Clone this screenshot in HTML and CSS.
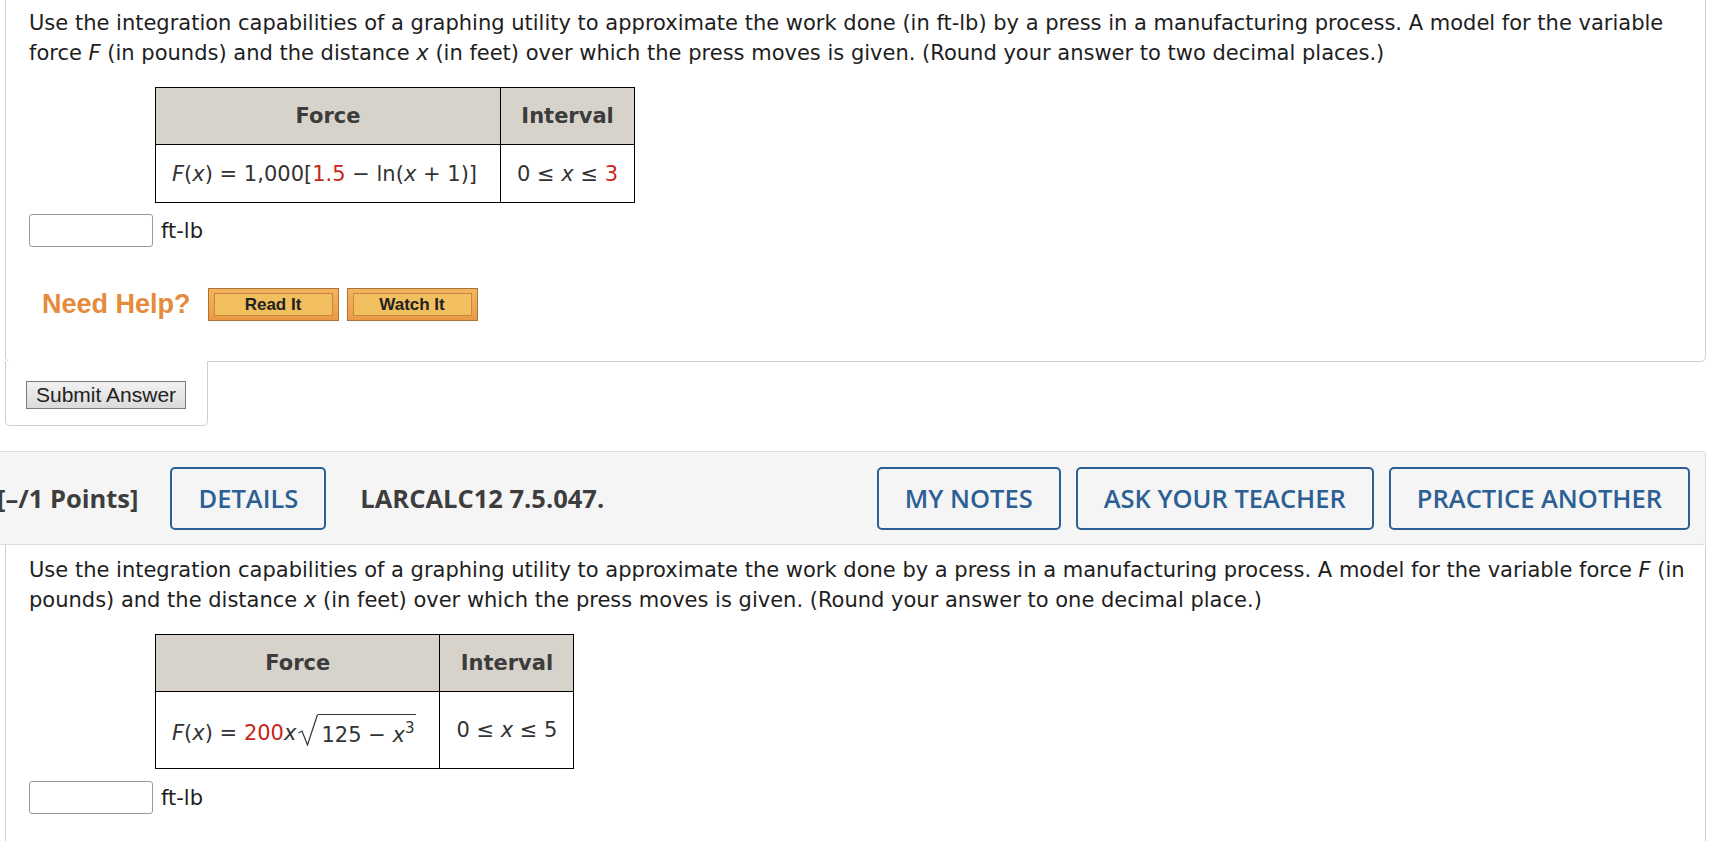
FILE: index.html
```html
<!DOCTYPE html>
<html lang="en">
<head>
<meta charset="utf-8">
<title>Question</title>
<link rel="stylesheet" href="styles.css">
</head>
<body>
<div class="question q1">
  <p class="prompt">Use the integration capabilities of a graphing utility to approximate the work done (in ft-lb) by a press in a manufacturing process. A model for the variable force <i>F</i> (in pounds) and the distance <i>x</i> (in feet) over which the press moves is given. (Round your answer to two decimal places.)</p>
  <table class="data">
    <tr><th>Force</th><th>Interval</th></tr>
    <tr>
      <td><i>F</i>(<i>x</i>) = 1,000[<span class="red">1.5</span> &minus; ln(<i>x</i> + 1)]</td>
      <td>0 &le; <i>x</i> &le; <span class="red">3</span></td>
    </tr>
  </table>
  <div class="answer"><span class="ansbox"></span><span class="unit">ft-lb</span></div>
  <div class="help">
    <span class="need">Need Help?</span>
    <span class="hbtn"><span class="hin">Read It</span></span>
    <span class="hbtn"><span class="hin">Watch It</span></span>
  </div>
</div>
<div class="submit-tab"><span class="submit">Submit Answer</span></div>

<div class="qhead">
  <span class="points">[&ndash;/1 Points]</span>
  <span class="obtn details">DETAILS</span>
  <span class="qid">LARCALC12 7.5.047.</span>
  <div class="actions">
    <span class="obtn">MY NOTES</span>
    <span class="obtn">ASK YOUR TEACHER</span>
    <span class="obtn">PRACTICE ANOTHER</span>
  </div>
</div>
<div class="question q2">
  <p class="prompt">Use the integration capabilities of a graphing utility to approximate the work done by a press in a manufacturing process. A model for the variable force <i>F</i> (in pounds) and the distance <i>x</i> (in feet) over which the press moves is given. (Round your answer to one decimal place.)</p>
  <table class="data">
    <tr><th>Force</th><th>Interval</th></tr>
    <tr class="tall">
      <td><i>F</i>(<i>x</i>) = <span class="red">200</span><i>x</i><span class="sqrt"><svg class="rad" width="20" height="32" viewBox="0 0 20 32"><path d="M0.5 19 L4 17 L9.5 31 L19.5 0.5" fill="none" stroke="#333" stroke-width="1.2"/></svg><span class="radicand">125 &minus; <i>x</i><sup>3</sup></span></span></td>
      <td>0 &le; <i>x</i> &le; 5</td>
    </tr>
  </table>
  <div class="answer"><span class="ansbox"></span><span class="unit">ft-lb</span></div>
</div>
</body>
</html>
```

FILE: styles.css
```css
html, body {
  margin: 0;
  padding: 0;
  background: #fff;
}
body {
  font-family: "DejaVu Sans", Verdana, sans-serif;
  font-size: 21px;
  color: #1e1e1e;
  overflow: hidden;
}
.question {
  margin: 0 26px 0 5px;
  border: 1px solid #cfcfcf;
  background: #fff;
  padding: 10px 20px 0 23px;
}
.q1 {
  margin-top: -3px;
  border-radius: 0 0 5px 5px;
  padding-bottom: 40px;
}
.q2 {
  border-top: none;
  padding-top: 10px;
  padding-bottom: 40px;
}
.prompt {
  margin: 0;
  line-height: 30px;
}
.data {
  border-collapse: collapse;
  margin: 19px 0 0 126px;
  color: #333;
}
.data th, .data td {
  border: 1px solid #000;
  padding: 0 16px;
  white-space: nowrap;
}
.data th {
  height: 56px;
  background: #d7d3ca;
  color: #3c3c3c;
  font-weight: bold;
  text-align: center;
}
.data td {
  height: 57px;
  text-align: left;
}
.data td:first-child {
  padding-right: 23px;
}
.data .tall td {
  height: 76px;
}
.red { color: #c8261b; }
.sqrt {
  display: inline-flex;
  align-items: flex-end;
  vertical-align: -6px;
  margin-left: 2px;
}
.rad { display: block; }
.radicand {
  border-top: 1px solid #333;
  padding: 9px 2px 0 3px;
  line-height: 22px;
}
.radicand sup {
  font-size: 15px;
  line-height: 0;
  vertical-align: 9px;
}
.answer {
  display: flex;
  align-items: center;
  margin-top: 11px;
}
.q2 .answer { margin-top: 12px; }
.ansbox {
  display: block;
  width: 124px;
  height: 33px;
  box-sizing: border-box;
  border: 1px solid #9a9a9a;
  border-radius: 3px;
  background: #fff;
}
.unit {
  margin-left: 8px;
}
.help {
  display: flex;
  align-items: center;
  margin-top: 41px;
  margin-left: 13px;
}
.need {
  font-family: "Liberation Sans", Arial, sans-serif;
  font-weight: bold;
  font-size: 27px;
  color: #e48b3c;
  margin-right: 17px;
}
.hbtn {
  display: block;
  width: 131px;
  height: 33px;
  box-sizing: border-box;
  border: 1px solid #a9743a;
  background: linear-gradient(#f6b45e, #ec9a44);
  padding: 4px 5px;
  margin-right: 8px;
}
.hin {
  display: flex;
  align-items: center;
  justify-content: center;
  height: 100%;
  box-sizing: border-box;
  border: 1px solid #c7893f;
  background: #f2bf5f;
  font-family: "Liberation Sans", Arial, sans-serif;
  font-weight: bold;
  font-size: 17px;
  color: #222;
}
.submit-tab {
  margin: -1px 0 0 5px;
  width: 203px;
  height: 65px;
  box-sizing: border-box;
  border: 1px solid #cfcfcf;
  border-top: none;
  border-radius: 0 0 5px 5px;
  background: #fff;
  padding: 20px 0 0 20px;
}
.submit {
  display: inline-flex;
  align-items: center;
  height: 28px;
  box-sizing: border-box;
  padding: 0 9px;
  border: 1px solid #7a7a7a;
  background: linear-gradient(#f2f2f2, #dadada);
  font-family: "Liberation Sans", Arial, sans-serif;
  font-size: 21px;
  color: #222;
}
.qhead {
  display: flex;
  align-items: center;
  margin: 25px 26px 0 -30px;
  height: 94px;
  box-sizing: border-box;
  border: 1px solid #dcdcdc;
  border-radius: 3px;
  background: #f5f5f5;
  padding: 0 15px 0 26px;
  font-family: "Open Sans", sans-serif;
  font-size: 25.5px;
}
.points {
  font-weight: bold;
  color: #3d3d3d;
  margin-right: 32px;
}
.qid {
  font-weight: bold;
  color: #3d3d3d;
  margin-left: 34px;
}
.obtn {
  display: inline-flex;
  align-items: center;
  height: 63px;
  box-sizing: border-box;
  padding: 0 26px;
  border: 2px solid #2c5f94;
  border-radius: 5px;
  background: #f5f5f5;
  color: #2c5f94;
  font-weight: 600;
}
.actions {
  margin-left: auto;
  display: flex;
  gap: 15px;
}
```
